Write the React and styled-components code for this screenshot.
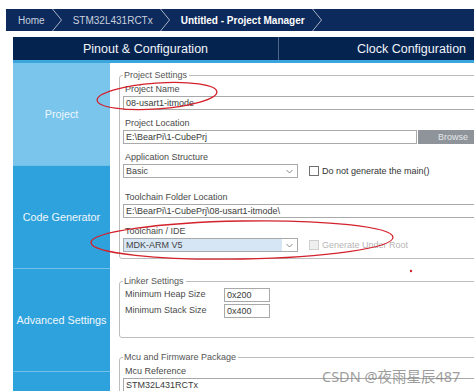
import React from 'react';
import styled, { createGlobalStyle } from 'styled-components';

const GlobalStyle = createGlobalStyle`
  body {
    margin: 0;
    background: #ffffff;
    overflow: hidden;
    font-family: "Liberation Sans", Arial, sans-serif;
  }
`;

const Page = styled.div`
  position: relative;
  width: 474px;
  height: 391px;
  overflow: hidden;
  padding-top: 9px;
  box-sizing: border-box;
  background: #ffffff;
`;

const Breadcrumb = styled.div`
  display: flex;
  align-items: center;
  height: 22px;
  margin-left: 6px;
  padding-left: 12px;
  background: #0c2a5c;
  white-space: nowrap;
`;

const Crumb = styled.span`
  font-size: 10px;
  color: ${p => (p.$current ? '#ffffff' : '#c9d1de')};
  font-weight: ${p => (p.$current ? 700 : 400)};
`;

const Chevron = styled.svg`
  display: block;
  width: 10px;
  height: 22px;
  margin: 0 11px 0 7px;
  flex-shrink: 0;
`;

const Main = styled.div`
  margin: 6px 0 0 13px;
`;

const Tabs = styled.div`
  display: flex;
  height: 23px;
`;

const Tab = styled.div`
  width: 265px;
  flex-shrink: 0;
  display: flex;
  align-items: center;
  justify-content: center;
  background: #05234f;
  color: #f2f5fa;
  font-size: 12.5px;
  border-right: ${p => (p.$divider ? '1px solid #50678c' : 'none')};
`;

const Strip = styled.div`
  height: 3px;
  background: #3aa6dd;
`;

const Body = styled.div`
  display: flex;
`;

const Sidebar = styled.div`
  width: 97px;
  flex-shrink: 0;
`;

const NavItem = styled.div`
  height: 102px;
  display: flex;
  align-items: center;
  justify-content: center;
  background: ${p => (p.$active ? '#79c5ec' : '#2ea2dc')};
  border-bottom: 1px solid #72c0e8;
  color: #eef7fc;
  font-size: 10.8px;
  white-space: nowrap;
`;

const Content = styled.div`
  padding: 7px 0 0 9px;
`;

const Group = styled.fieldset`
  margin: ${p => p.$top || 0}px 0 0 0;
  padding: 0 3px ${p => p.$bottom || 6}px 3px;
  width: 373px;
  box-sizing: border-box;
  border: 1px solid #bdbdbd;
  border-radius: 3px;
`;

const Legend = styled.legend`
  padding: 0 2px 0 1px;
  font-size: 9px;
  line-height: 11px;
  color: #555555;
`;

const Field = styled.div`
  margin-top: ${p => p.$gap}px;
`;

const Label = styled.div`
  padding-left: 2px;
  margin-bottom: 1px;
  font-size: 9px;
  line-height: 11px;
  color: #4a4a4a;
  white-space: nowrap;
`;

const TextBox = styled.div`
  height: 14px;
  box-sizing: border-box;
  border: 1px solid #a9a9a9;
  padding-left: 2px;
  font-size: 9px;
  line-height: 12px;
  color: #3a3a3a;
  background: #ffffff;
  white-space: nowrap;
  overflow: hidden;
  flex: ${p => (p.$grow ? 1 : 'none')};
`;

const Row = styled.div`
  display: flex;
  align-items: center;
`;

const BrowseButton = styled.div`
  width: 70px;
  height: 14px;
  flex-shrink: 0;
  margin-left: 1px;
  display: flex;
  align-items: center;
  justify-content: center;
  background: #8e949a;
  color: #e4e7eb;
  font-size: 9px;
`;

const Select = styled.div`
  width: 175px;
  height: 14px;
  box-sizing: border-box;
  display: flex;
  border: 1px solid #a9a9a9;
  background: ${p => p.$fill || '#ffffff'};
  font-size: 9px;
  color: #444444;
`;

const SelectValue = styled.div`
  flex: 1;
  padding-left: 2px;
  line-height: 12px;
`;

const SelectArrow = styled.div`
  width: 15px;
  display: flex;
  align-items: center;
  justify-content: center;
  background: #ffffff;
`;

const Check = styled.label`
  display: flex;
  align-items: center;
  margin-left: 11px;
  font-size: 9px;
  color: ${p => (p.$disabled ? '#b6b6b6' : '#333333')};
  white-space: nowrap;
`;

const Box = styled.span`
  width: 8px;
  height: 8px;
  margin-right: 3px;
  border: 1px solid ${p => (p.$disabled ? '#cfcfcf' : '#707070')};
  background: ${p => (p.$disabled ? '#efefef' : '#ffffff')};
`;

const SettingRow = styled.div`
  display: grid;
  grid-template-columns: 101px 46px;
  align-items: center;
  margin-top: ${p => p.$gap}px;
`;

const Marks = styled.svg`
  position: absolute;
  left: 0;
  top: 0;
  pointer-events: none;
`;

const Watermark = styled.div`
  position: absolute;
  left: 322px;
  top: 366px;
  font-family: "Noto Sans", "Noto Sans CJK SC", sans-serif;
  font-size: 14.5px;
  line-height: 20px;
  color: rgba(125, 125, 125, 0.75);
  white-space: nowrap;
`;

const Sep = () => (
  <Chevron viewBox="0 0 10 22">
    <polyline points="0.5,0 9.5,11 0.5,22" fill="none" stroke="#b9c2d1" strokeWidth="0.9" />
  </Chevron>
);

const Arrow = () => (
  <svg width="7" height="5" viewBox="0 0 7 5">
    <polyline points="0.5,1 3.5,4 6.5,1" fill="none" stroke="#8a8a8a" strokeWidth="1" />
  </svg>
);

export default function App() {
  return (
    <Page>
      <GlobalStyle />
      <Breadcrumb>
        <Crumb>Home</Crumb>
        <Sep />
        <Crumb>STM32L431RCTx</Crumb>
        <Sep />
        <Crumb $current>Untitled - Project Manager</Crumb>
        <Sep />
      </Breadcrumb>

      <Main>
        <Tabs>
          <Tab $divider>Pinout &amp; Configuration</Tab>
          <Tab>Clock Configuration</Tab>
        </Tabs>
        <Strip />
        <Body>
          <Sidebar>
            <NavItem $active>Project</NavItem>
            <NavItem>Code Generator</NavItem>
            <NavItem>Advanced Settings</NavItem>
            <NavItem />
          </Sidebar>

          <Content>
            <Group $bottom={6}>
              <Legend>Project Settings</Legend>
              <Field $gap={3}>
                <Label>Project Name</Label>
                <TextBox>08-usart1-itmode</TextBox>
              </Field>
              <Field $gap={8}>
                <Label>Project Location</Label>
                <Row>
                  <TextBox $grow>E:\BearPi\1-CubePrj</TextBox>
                  <BrowseButton>Browse</BrowseButton>
                </Row>
              </Field>
              <Field $gap={8}>
                <Label>Application Structure</Label>
                <Row>
                  <Select>
                    <SelectValue>Basic</SelectValue>
                    <SelectArrow><Arrow /></SelectArrow>
                  </Select>
                  <Check>
                    <Box />
                    Do not generate the main()
                  </Check>
                </Row>
              </Field>
              <Field $gap={14}>
                <Label>Toolchain Folder Location</Label>
                <TextBox>E:\BearPi\1-CubePrj\08-usart1-itmode\</TextBox>
              </Field>
              <Field $gap={8}>
                <Label>Toolchain / IDE</Label>
                <Row>
                  <Select $fill="#d6e6f5">
                    <SelectValue>MDK-ARM V5</SelectValue>
                    <SelectArrow><Arrow /></SelectArrow>
                  </Select>
                  <Check $disabled>
                    <Box $disabled />
                    Generate Under Root
                  </Check>
                </Row>
              </Field>
            </Group>

            <Group $top={17} $bottom={19}>
              <Legend>Linker Settings</Legend>
              <SettingRow $gap={1}>
                <Label>Minimum Heap Size</Label>
                <TextBox>0x200</TextBox>
              </SettingRow>
              <SettingRow $gap={2}>
                <Label>Minimum Stack Size</Label>
                <TextBox>0x400</TextBox>
              </SettingRow>
            </Group>

            <Group $top={14}>
              <Legend>Mcu and Firmware Package</Legend>
              <Field $gap={3}>
                <Label>Mcu Reference</Label>
                <TextBox>STM32L431RCTx</TextBox>
              </Field>
            </Group>
          </Content>
        </Body>
      </Main>

      <Marks width="474" height="391" viewBox="0 0 474 391">
        <ellipse cx="157" cy="96" rx="60" ry="13" transform="rotate(-4 157 96)" fill="none" stroke="#d3222c" strokeWidth="1.3" />
        <ellipse cx="242" cy="240" rx="151" ry="19" transform="rotate(-1 242 240)" fill="none" stroke="#d3222c" strokeWidth="1.3" />
        <circle cx="411" cy="271" r="1.2" fill="#d3222c" />
      </Marks>
      <Watermark>CSDN @夜雨星辰487</Watermark>
    </Page>
  );
}
